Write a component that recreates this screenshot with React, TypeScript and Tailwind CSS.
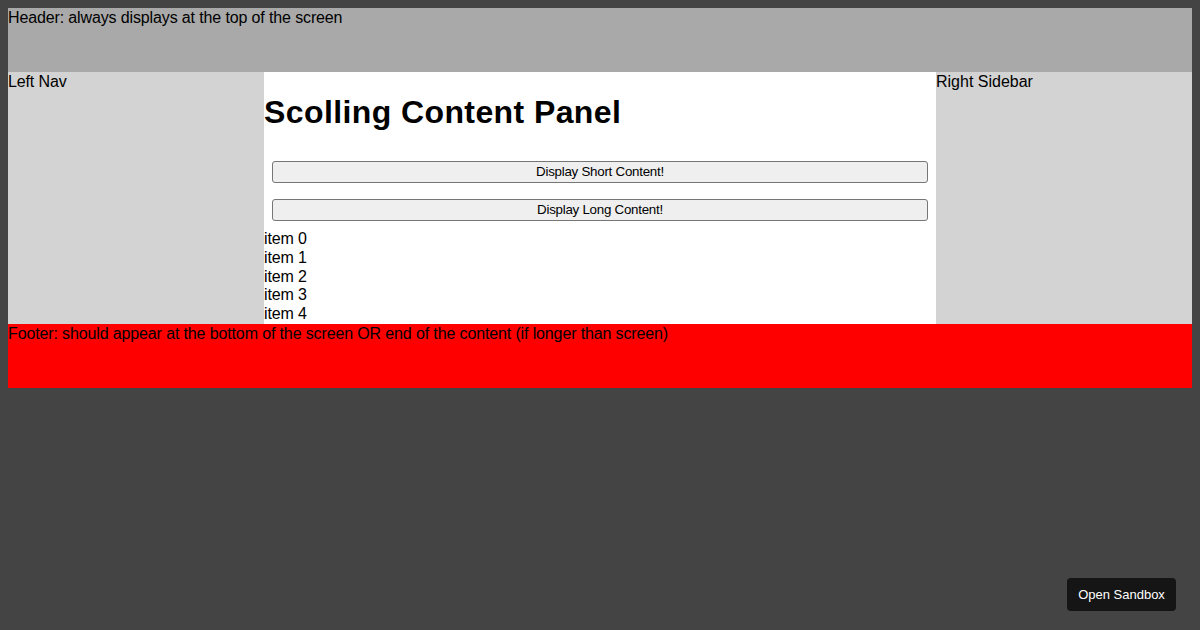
import { useState } from 'react'

export default function App() {
  const [count, setCount] = useState(5)

  return (
    <div className="min-h-[630px] bg-[#444444] p-2 font-['Liberation_Sans',Arial,sans-serif] text-base tracking-[-0.13px] text-black">
      <div className="flex flex-col">
        <header className="h-16 bg-[#a9a9a9] leading-[19px]">Header: always displays at the top of the screen</header>
        <div className="flex h-[252px]">
          <nav className="w-64 shrink-0 bg-[#d3d3d3] leading-[19px]">Left Nav</nav>
          <main className="flex-1 bg-white">
            <h1 className="mt-[22px] mb-[30px] text-[32px] font-bold leading-[37px] tracking-[0.4px]">Scolling Content Panel</h1>
            <button
              onClick={() => setCount(5)}
              className="mx-2 block h-[22px] w-[calc(100%-16px)] rounded-[3px] border border-[#767676] bg-[#efefef] text-[13.33px] leading-[20px] tracking-[-0.25px]"
            >
              Display Short Content!
            </button>
            <button
              onClick={() => setCount(50)}
              className="mx-2 mt-4 mb-2 block h-[22px] w-[calc(100%-16px)] rounded-[3px] border border-[#767676] bg-[#efefef] text-[13.33px] leading-[20px] tracking-[-0.25px]"
            >
              Display Long Content!
            </button>
            <div className="pt-[1px] leading-[18.75px]">
              {Array.from({ length: count }).map((_, i) => (
                <div key={i}>item {i}</div>
              ))}
            </div>
          </main>
          <aside className="w-64 shrink-0 bg-[#d3d3d3] leading-[19px] tracking-normal">Right Sidebar</aside>
        </div>
        <footer className="h-16 bg-[#ff0000] leading-[19px]">
          Footer: should appear at the bottom of the screen OR end of the content (if longer than screen)
        </footer>
      </div>
      <button className="fixed right-6 bottom-[19px] h-[33px] w-[109px] rounded-[4px] bg-[#151515] text-[13px] tracking-normal text-white">
        Open Sandbox
      </button>
    </div>
  )
}
